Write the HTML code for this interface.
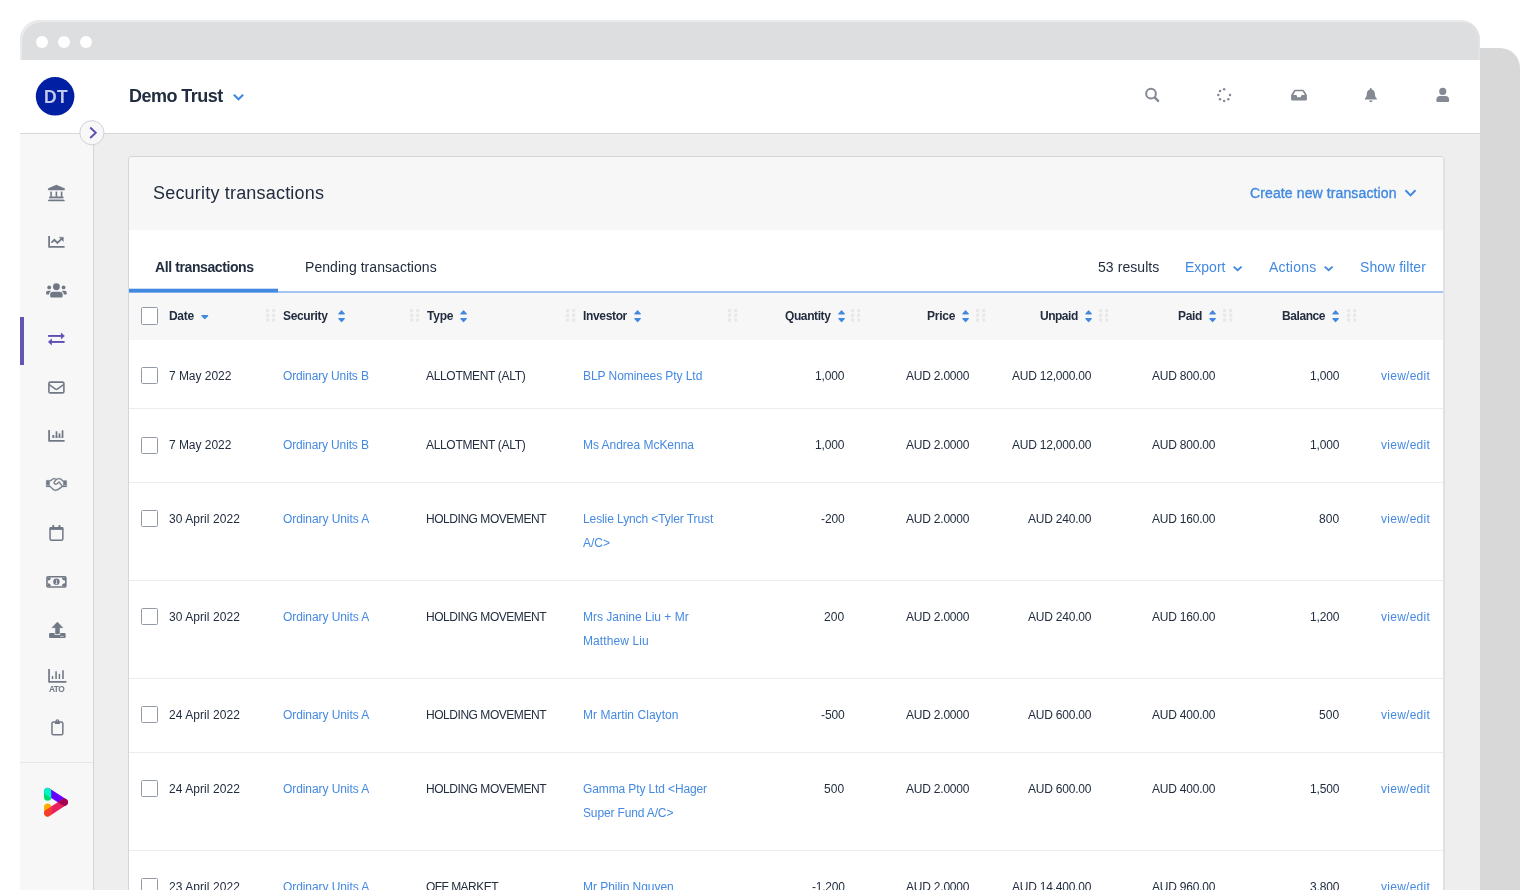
<!DOCTYPE html>
<html lang="en">
<head>
<meta charset="utf-8">
<title>Security transactions - Demo Trust</title>
<style>
*{box-sizing:border-box}
html,body{margin:0;padding:0}
body{width:1540px;height:890px;overflow:hidden;position:relative;background:#fff;font-family:"Liberation Sans",sans-serif;}
.abs,.t,.ic,.cb{position:absolute}
.t{white-space:pre;margin:0;font-weight:400;text-decoration:none;will-change:transform}
.ic{display:block;overflow:visible}
.shadow{left:1440px;top:48px;width:80px;height:900px;background:#d8d8d8;border-radius:0 20px 0 0}
.window{left:20px;top:20px;width:1460px;height:900px;background:#eeeeee;border-radius:20px 20px 0 0}
.chrome{left:20px;top:20px;width:1460px;height:40px;background:#dddee0;border-radius:20px 20px 0 0;box-shadow:inset 2px 2px 0 0 #eaebed, inset -2px 0 0 0 #e2e3e5}
.dot{width:12px;height:12px;border-radius:50%;background:#fff;top:36px}
.topbar{left:20px;top:60px;width:1460px;height:74px;background:#fff;border-bottom:1px solid #d6d8dc}
.sidebar{left:20px;top:134px;width:74px;height:800px;background:#f7f7f7;border-right:1px solid #d3d5da}
.card{left:128px;top:156px;width:1317px;height:800px;background:#fff;border:1px solid #d2d5da;border-right:2px solid #dfe1e5;border-radius:4px 5px 0 0}
.cardhead{left:129px;top:157px;width:1314px;height:73px;background:#f7f7f7;border-radius:3px 3px 0 0}
.thead{left:129px;top:293px;width:1314px;height:47px;background:#f7f7f7}
.tabline{left:129px;top:291px;width:1314px;height:2px;background:#a5c6f0}
.tabactive{left:129px;top:289px;width:149px;height:3px;background:#4189e0;box-shadow:0 -1px 0 #c9dcf6, 0 1px 0 #7fafea}
.rowline{left:129px;width:1314px;height:1px;background:#ececee}
.cb{width:17px;height:17px;border:1px solid #949aa3;border-radius:1.5px;background:#fff;left:141px}
.activebar{left:20px;top:317px;width:4px;height:48px;background:#6554b4}
.sep{left:20px;top:762px;width:73px;height:1px;background:#e6e6e8}
</style>
</head>
<body>
<div class="abs shadow"></div>
<div class="app">
<div class="abs window"></div>
<div class="titlebar"><div class="abs chrome"></div><span class="abs dot" style="left:36px"></span><span class="abs dot" style="left:58px"></span><span class="abs dot" style="left:80px"></span></div>
<header>
<div class="abs topbar"></div>
<svg class="ic" aria-hidden="true" style="left:30px;top:70px" width="50" height="50" viewBox="30 70 50 50"><circle cx="55.1" cy="96.3" r="19.3" fill="#001fa3"/></svg>
<span class="t avatar" style="left:44.19px;top:84.14px;font-size:17.5px;line-height:26px;color:#c3c9ea;letter-spacing:0.448px;font-weight:700;">DT</span>
<h1 class="t" style="left:129.01px;top:82.76px;font-size:18px;line-height:27px;color:#222d3f;letter-spacing:-0.528px;font-weight:700;">Demo Trust</h1>
<svg class="ic" aria-hidden="true" style="left:230px;top:90px" width="16" height="14" viewBox="0 0 16 14"><path d="M3.9 4.7 L8.5 9.2 L13.1 4.7" fill="none" stroke="#4189e0" stroke-width="2.1"/></svg>
<svg class="ic" aria-hidden="true" style="left:1130px;top:80px" width="340" height="30" viewBox="1130 80 340 30"><g><circle cx="1151" cy="93.7" r="4.85" fill="none" stroke="#848994" stroke-width="2"/><line x1="1154.9" y1="97.6" x2="1158.1" y2="100.8" stroke="#848994" stroke-width="2.5" stroke-linecap="round"/></g><g><circle cx="1224.15" cy="89.25" r="1.25" fill="#848994"/><circle cx="1230.00" cy="95.10" r="1.25" fill="#848994"/><circle cx="1228.29" cy="99.24" r="1.25" fill="#848994"/><circle cx="1224.15" cy="100.95" r="1.25" fill="#848994"/><circle cx="1220.01" cy="99.24" r="1.25" fill="#848994"/><circle cx="1218.30" cy="95.10" r="1.25" fill="#848994"/><circle cx="1220.01" cy="90.96" r="1.25" fill="#848994"/></g><g transform="translate(1286 82)"><path fill-rule="evenodd" fill="#848994" d="M8.7 7.7 H17.1 Q17.6 7.7 17.9 8.2 L20.9 13 V17.6 Q20.9 18.4 20.1 18.4 H5.9 Q5.1 18.4 5.1 17.6 V13 L8.1 8.2 Q8.4 7.7 8.7 7.7 Z M9.4 9.3 H16.6 L18.8 13.1 H15.6 L14.6 15.2 H11.4 L10.4 13.1 H7.2 Z"/></g><g transform="translate(1358 82)"><path fill="#848994" d="M12.85 5.9 a0.95 0.95 0 0 1 0.95 0.95 V7.4 C15.6 7.9 16.9 9.5 16.9 11.6 C16.9 14.3 17.6 15.3 18.6 16.3 Q19.1 16.8 18.9 17.2 Q18.7 17.6 18.2 17.6 H7.5 Q7 17.6 6.8 17.2 Q6.6 16.8 7.1 16.3 C8.1 15.3 8.8 14.3 8.8 11.6 C8.8 9.5 10.1 7.9 11.9 7.4 V6.85 a0.95 0.95 0 0 1 0.95 -0.95 Z M11.1 18.5 H14.6 a1.75 1.75 0 0 1 -3.5 0 Z"/></g><g><circle cx="1442.75" cy="91.4" r="3.55" fill="#848994"/><path d="M1436.4 101 V99.6 a3.7 3.7 0 0 1 3.7 -3.7 h5.3 a3.7 3.7 0 0 1 3.7 3.7 V101 a1.1 1.1 0 0 1 -1.1 1.1 h-10.5 a1.1 1.1 0 0 1 -1.1 -1.1 Z" fill="#848994"/></g></svg>
</header>
<nav>
<div class="abs sidebar"></div>
<svg class="ic" aria-hidden="true" style="left:76px;top:116px" width="32" height="32" viewBox="76 116 32 32"><circle cx="91.9" cy="132.75" r="12.1" fill="#f8f8f8" stroke="#d0d2d8" stroke-width="1"/><path d="M90.2 127.5 L95.8 132.75 L90.2 138" fill="none" stroke="#5f4db3" stroke-width="1.9"/></svg>
<div class="abs activebar"></div>
<svg class="ic" aria-hidden="true" style="left:40px;top:170px" width="40" height="580" viewBox="40 170 40 580"><g transform="translate(44 180)"><path d="M4.3 8.6 L12.4 5.1 L20.5 8.6 V10 H4.3 Z" fill="#717885" stroke="#717885" stroke-width="0.5" stroke-linejoin="round"/><rect x="6.3" y="11.6" width="1.6" height="5.2" fill="#717885"/><rect x="11.6" y="11.6" width="1.6" height="5.2" fill="#717885"/><rect x="16.8" y="11.6" width="1.6" height="5.2" fill="#717885"/><rect x="5.1" y="16.6" width="14.4" height="1.4" rx="0.5" fill="#717885"/><rect x="4.1" y="19.7" width="16.6" height="1.6" rx="0.6" fill="#717885"/><rect x="5.1" y="18" width="14.4" height="1.7" fill="#717885" opacity="0.35"/></g><g transform="translate(44 229)"><path d="M5.1 7 V17.95 H20.6" fill="none" stroke="#717885" stroke-width="1.75" stroke-linejoin="round"/><path d="M8 13.1 L10.4 10.8 L13.4 13.9 L17.6 9.9" fill="none" stroke="#717885" stroke-width="1.8" stroke-linecap="round" stroke-linejoin="miter"/><path d="M15.1 8.2 H19.4 V12.5 Z" fill="#717885" stroke="#717885" stroke-width="0.4" stroke-linejoin="round"/></g><g transform="translate(44 278)"><circle cx="12.4" cy="8.8" r="3.45" fill="#717885"/><path d="M6.1 18.3 V16.9 a3.2 3.2 0 0 1 3.2 -3.2 h6.2 a3.2 3.2 0 0 1 3.2 3.2 V18.3 a1.1 1.1 0 0 1 -1.1 1.1 H7.2 a1.1 1.1 0 0 1 -1.1 -1.1 Z" fill="#717885"/><circle cx="5.2" cy="9.4" r="1.9" fill="#717885"/><circle cx="19.55" cy="9.4" r="1.9" fill="#717885"/><path d="M7.1 13.1 Q6.4 12.7 5.6 12.7 H4.2 A2.2 2.2 0 0 0 2 14.9 V15.4 a1 1 0 0 0 1 1 H4.9 Q5.1 14.2 7.1 13.1 Z" fill="#717885"/><path d="M17.7 13.1 Q18.4 12.7 19.2 12.7 H20.6 A2.2 2.2 0 0 1 22.8 14.9 V15.4 a1 1 0 0 1 -1 1 H19.9 Q19.7 14.2 17.7 13.1 Z" fill="#717885"/></g><g transform="translate(44 326)"><path d="M4.1 9.95 H19" stroke="#5f4db3" stroke-width="1.9" fill="none"/><path d="M17.3 7.1 L20.4 9.95 L17.3 12.8 Z" fill="#5f4db3" stroke="#5f4db3" stroke-width="0.7" stroke-linejoin="round"/><path d="M20.6 15.95 H5.8" stroke="#5f4db3" stroke-width="1.9" fill="none"/><path d="M7.5 13.1 L4.4 15.95 L7.5 18.8 Z" fill="#5f4db3" stroke="#5f4db3" stroke-width="0.7" stroke-linejoin="round"/></g><g transform="translate(44 375)"><rect x="4.9" y="7.1" width="15" height="10.8" rx="1.4" fill="none" stroke="#717885" stroke-width="1.6"/><path d="M5.2 9.7 L11.5 14.1 Q12.4 14.7 13.3 14.1 L19.6 9.7" fill="none" stroke="#717885" stroke-width="1.5" stroke-linejoin="round"/></g><g transform="translate(44 423)"><path d="M5.1 7 V17.95 H20.6" fill="none" stroke="#717885" stroke-width="1.75" stroke-linejoin="round"/><rect x="8.3" y="12.1" width="1.75" height="2.8" rx="0.3" fill="#717885"/><rect x="11.65" y="8.2" width="1.7" height="6.7" rx="0.3" fill="#717885"/><rect x="14.7" y="10.2" width="1.6" height="4.7" rx="0.3" fill="#717885"/><rect x="17.7" y="7.2" width="1.7" height="7.7" rx="0.3" fill="#717885"/><rect x="10.05" y="12.6" width="7.65" height="2.3" fill="#717885" opacity="0.3"/></g><g transform="translate(46.2 478.2) scale(0.008898 0.008656)"><path fill="#717885" stroke="#717885" stroke-width="22" d="M136 864Q152 896 192 896Q232 896 248 864Q264 832 248 800Q232 768 192 768Q152 768 136 800Q120 832 136 864ZM1665 838Q1655 825 1626.5 788Q1598 751 1585 734Q1572 717 1547 685Q1522 653 1504.5 632Q1487 611 1464 585Q1441 559 1419 536L1294 676Q1211 770 1085.5 768Q960 766 880 670Q823 601 823.5 512Q824 423 882 355L1059 149Q1037 138 1008 132.5Q979 127 960.5 126.5Q942 126 904 127Q866 128 855 128Q763 128 697 194L539 352H384V896Q389 896 405 895.5Q421 895 427 895.5Q433 896 446.5 897.5Q460 899 467 902Q474 905 484.5 910.5Q495 916 503 924L800 1216Q915 1327 1027 1327Q1105 1327 1152 1280Q1209 1300 1264.5 1272Q1320 1244 1337 1187Q1411 1193 1464 1143Q1484 1125 1500 1097.5Q1516 1070 1514 1047Q1524 1057 1557 1057Q1600 1057 1634 1036Q1668 1015 1683.5 983Q1699 951 1695.5 911.5Q1692 872 1665 838ZM1824 896H1920V384H1827L1670 204Q1604 128 1501 128H1334Q1245 128 1188 195L979 438Q951 471 951 513Q951 555 978 588Q1021 639 1088 640Q1155 641 1199 591L1392 373Q1417 350 1445.5 351.5Q1474 353 1492.5 378.5Q1511 404 1501 435Q1517 454 1557 498Q1597 542 1617 566Q1646 602 1699.5 671.5Q1753 741 1764 756Q1816 822 1824 896ZM2056 864Q2072 896 2112 896Q2152 896 2168 864Q2184 832 2168 800Q2152 768 2112 768Q2072 768 2056 800Q2040 832 2056 864ZM2304 320V960Q2304 986 2285 1005Q2266 1024 2240 1024H1806Q1779 1089 1724 1130.5Q1669 1172 1599 1182Q1566 1230 1518.5 1263.5Q1471 1297 1416 1309Q1374 1362 1311.5 1390.5Q1249 1419 1183 1415Q1123 1449 1057 1454.5Q991 1460 929.5 1440.5Q868 1421 812.5 1387Q757 1353 709 1306L422 1024H64Q38 1024 19 1005Q0 986 0 960V288Q0 262 19 243Q38 224 64 224H485Q499 210 532 176Q565 142 579.5 128Q594 114 623.5 88Q653 62 674 50.5Q695 39 725 25Q755 11 787 5.5Q819 0 855 0H972Q1071 0 1153 56Q1235 0 1334 0H1501Q1536 0 1568 6Q1600 12 1624.5 20.5Q1649 29 1676 47Q1703 65 1720.5 78Q1738 91 1763.5 117.5Q1789 144 1802.5 159.5Q1816 175 1843.5 207.5Q1871 240 1885 256H2240Q2266 256 2285 275Q2304 294 2304 320Z"/></g><g transform="translate(44 520)"><rect x="6.05" y="7.75" width="12.8" height="12.5" rx="1.5" fill="none" stroke="#717885" stroke-width="1.5"/><rect x="5.6" y="7.2" width="13.7" height="2.7" fill="#717885"/><rect x="8.3" y="5.1" width="1.9" height="2.6" rx="0.4" fill="#717885"/><rect x="14.6" y="5.1" width="1.8" height="2.6" rx="0.4" fill="#717885"/></g><g transform="translate(44 569)"><rect x="3" y="7.7" width="18.8" height="10.3" rx="0.9" fill="none" stroke="#717885" stroke-width="1.6"/><path d="M3.8 8.5 h3 a3 3 0 0 1 -3 3 Z M21 8.5 v3 a3 3 0 0 1 -3 -3 Z M3.8 17.2 v-3 a3 3 0 0 1 3 3 Z M21 17.2 h-3 a3 3 0 0 1 3 -3 Z" fill="#717885"/><circle cx="12.4" cy="12.65" r="3.2" fill="#717885"/><path d="M11.7 11.3 L12.8 10.7 V14 H13.4 V14.7 H11.5 V14 H12.1 V11.6 L11.7 11.8 Z" fill="#f3f3f4"/></g><g transform="translate(44 617)"><path d="M13.4 5.1 L18.9 10.7 H15.5 V16.4 a0.5 0.5 0 0 1 -0.5 0.5 H12 a0.5 0.5 0 0 1 -0.5 -0.5 V10.7 H7.9 Z" fill="#717885" stroke="#717885" stroke-width="0.5" stroke-linejoin="round"/><path d="M5.9 16.1 H10.6 V17 a1.1 1.1 0 0 0 1.1 1.1 h3.6 a1.1 1.1 0 0 0 1.1 -1.1 V16.1 H20.8 a0.8 0.8 0 0 1 0.8 0.8 V20.2 a0.8 0.8 0 0 1 -0.8 0.8 H5.9 a0.8 0.8 0 0 1 -0.8 -0.8 V16.9 a0.8 0.8 0 0 1 0.8 -0.8 Z" fill="#717885"/><rect x="16" y="19.1" width="4" height="1" rx="0.4" fill="#b9bcc3"/></g><g transform="translate(43 665)"><path d="M6.05 4.1 V16.9 H23.4" fill="none" stroke="#717885" stroke-width="1.7" stroke-linejoin="round"/><rect x="8.8" y="11" width="1.45" height="3" rx="0.3" fill="#717885"/><rect x="12.3" y="6.3" width="1.55" height="7.7" rx="0.3" fill="#717885"/><rect x="15.7" y="8.8" width="1.45" height="5.2" rx="0.3" fill="#717885"/><rect x="19.2" y="5.3" width="1.6" height="8.7" rx="0.3" fill="#717885"/></g><g transform="translate(44 714)"><rect x="7.95" y="7.95" width="10.9" height="12.8" rx="1.6" fill="none" stroke="#717885" stroke-width="1.5"/><circle cx="13.4" cy="7.2" r="1.35" fill="none" stroke="#717885" stroke-width="1.3"/><rect x="10.9" y="8.1" width="5" height="1.8" rx="0.5" fill="#717885"/></g></svg>
<span class="t" style="left:49.0px;top:683.3px;font-size:8.4px;line-height:12px;font-weight:700;color:#717885;letter-spacing:-0.6px">ATO</span>
<div class="abs sep"></div>
<svg class="ic" aria-hidden="true" style="left:44px;top:788px" width="24" height="28.7" viewBox="0 0 24 28.7"><defs><clipPath id="lp1"><rect x="0.05" y="0" width="7.1" height="12.8" rx="3.55"/></clipPath><clipPath id="lp2"><rect x="0.05" y="15.4" width="7.1" height="13.2" rx="3.55"/></clipPath><clipPath id="lp3"><rect x="-3.55" y="-3.55" width="27.02" height="7.1" rx="3.55" transform="translate(3.6 3.55) rotate(32.5)"/></clipPath></defs><rect x="-3.55" y="-3.55" width="27.02" height="7.1" rx="3.55" transform="translate(3.6 3.55) rotate(32.5)" fill="#6a00ff"/><rect x="-3.55" y="-3.55" width="27.13" height="7.1" rx="3.55" transform="translate(3.6 25.05) rotate(-33)" fill="#e8205f"/><g clip-path="url(#lp3)"><rect x="-3.55" y="-3.55" width="27.13" height="7.1" rx="3.55" transform="translate(3.6 25.05) rotate(-33)" fill="#a5004f"/></g><rect x="0.05" y="0" width="7.1" height="12.8" rx="3.55" fill="#00dd6f"/><g clip-path="url(#lp1)"><rect x="-3.55" y="-3.55" width="27.02" height="7.1" rx="3.55" transform="translate(3.6 3.55) rotate(32.5)" fill="#00f5c8"/></g><rect x="0.05" y="15.4" width="7.1" height="13.2" rx="3.55" fill="#ffab00"/><g clip-path="url(#lp2)"><rect x="-3.55" y="-3.55" width="27.13" height="7.1" rx="3.55" transform="translate(3.6 25.05) rotate(-33)" fill="#f53d2f"/></g></svg>
</nav>
<main><section>
<div class="abs card"></div>
<div class="card-header"><div class="abs cardhead"></div>
<h2 class="t" style="left:153.01px;top:179.96px;font-size:18px;line-height:27px;color:#222d3f;letter-spacing:0.195px;">Security transactions</h2>
<a class="t" style="left:1250.13px;top:183.05px;font-size:14px;line-height:21px;color:#4189e0;letter-spacing:0.117px;-webkit-text-stroke:0.35px #4189e0;">Create new transaction</a>
<svg class="ic" aria-hidden="true" style="left:1403px;top:187px" width="15" height="12" viewBox="0 0 15 12"><path d="M2.5 3.2 L7.5 8.4 L12.5 3.2" fill="none" stroke="#4189e0" stroke-width="2"/></svg>
</div>
<div class="tabs"><div class="abs tabline"></div><div class="abs tabactive"></div>
<a class="t" style="left:155.13px;top:256.85px;font-size:14px;line-height:21px;color:#222d3f;letter-spacing:-0.399px;font-weight:700;">All transactions</a>
<a class="t" style="left:305.03px;top:256.75px;font-size:14px;line-height:21px;color:#222d3f;letter-spacing:0.050px;">Pending transactions</a>
<span class="t" style="left:1098.13px;top:256.75px;font-size:14px;line-height:21px;color:#222d3f;letter-spacing:0.070px;">53 results</span>
<a class="t" style="left:1184.83px;top:256.75px;font-size:14px;line-height:21px;color:#4189e0;letter-spacing:-0.008px;">Export</a>
<svg class="ic" aria-hidden="true" style="left:1231.7px;top:264px" width="12" height="9" viewBox="0 0 12 9"><path d="M1.7 2.6 L5.65 6.2 L9.6 2.6" fill="none" stroke="#4189e0" stroke-width="1.9"/></svg>
<a class="t" style="left:1269.23px;top:256.75px;font-size:14px;line-height:21px;color:#4189e0;letter-spacing:0.210px;">Actions</a>
<svg class="ic" aria-hidden="true" style="left:1322.9px;top:264px" width="12" height="9" viewBox="0 0 12 9"><path d="M1.7 2.6 L5.65 6.2 L9.6 2.6" fill="none" stroke="#4189e0" stroke-width="1.9"/></svg>
<a class="t" style="left:1359.93px;top:256.75px;font-size:14px;line-height:21px;color:#4189e0;letter-spacing:0.051px;">Show filter</a>
</div>
<div class="table" role="table">
<div class="thead-row" role="row"><div class="abs thead"></div><span class="cb" style="top:307px;height:18px"></span>
<div class="th" role="columnheader"><span class="t" style="left:169.44px;top:307.14px;font-size:12px;line-height:18px;color:#222d3f;letter-spacing:-0.312px;font-weight:700;">Date</span><svg class="ic" aria-hidden="true" style="left:200.8px;top:314.6px" width="7.6" height="4.4" viewBox="0 0 7.6 4.4"><path d="M0.9 0.7 L6.7 0.7 L3.8 3.7 Z" fill="#4189e0" stroke="#4189e0" stroke-width="1.2" stroke-linejoin="round"/></svg></div>
<div class="th" role="columnheader"><svg class="ic" aria-hidden="true" style="left:265.9px;top:309.2px" width="9.3" height="12.7" viewBox="0 0 9.3 12.7"><rect x="0" y="0" width="3.1" height="3.1" fill="#e8e8e8"/><rect x="0" y="4.75" width="3.1" height="3.1" fill="#e8e8e8"/><rect x="0" y="9.5" width="3.1" height="3.1" fill="#e8e8e8"/><rect x="6.1" y="0" width="3.1" height="3.1" fill="#e8e8e8"/><rect x="6.1" y="4.75" width="3.1" height="3.1" fill="#e8e8e8"/><rect x="6.1" y="9.5" width="3.1" height="3.1" fill="#e8e8e8"/></svg><span class="t" style="left:282.74px;top:307.14px;font-size:12px;line-height:18px;color:#222d3f;letter-spacing:-0.355px;font-weight:700;">Security</span><svg class="ic" aria-hidden="true" style="left:338.3px;top:309.6px" width="7.2" height="12.6" viewBox="0 0 7.2 12.6"><path d="M0.9 3.9 L3.6 1 L6.3 3.9 Z M0.9 8.7 L6.3 8.7 L3.6 11.6 Z" fill="#4189e0" stroke="#4189e0" stroke-width="1.2" stroke-linejoin="round"/></svg></div>
<div class="th" role="columnheader"><svg class="ic" aria-hidden="true" style="left:410.3px;top:309.2px" width="9.3" height="12.7" viewBox="0 0 9.3 12.7"><rect x="0" y="0" width="3.1" height="3.1" fill="#e8e8e8"/><rect x="0" y="4.75" width="3.1" height="3.1" fill="#e8e8e8"/><rect x="0" y="9.5" width="3.1" height="3.1" fill="#e8e8e8"/><rect x="6.1" y="0" width="3.1" height="3.1" fill="#e8e8e8"/><rect x="6.1" y="4.75" width="3.1" height="3.1" fill="#e8e8e8"/><rect x="6.1" y="9.5" width="3.1" height="3.1" fill="#e8e8e8"/></svg><span class="t" style="left:426.64px;top:307.14px;font-size:12px;line-height:18px;color:#222d3f;letter-spacing:-0.219px;font-weight:700;">Type</span><svg class="ic" aria-hidden="true" style="left:459.8px;top:309.6px" width="7.2" height="12.6" viewBox="0 0 7.2 12.6"><path d="M0.9 3.9 L3.6 1 L6.3 3.9 Z M0.9 8.7 L6.3 8.7 L3.6 11.6 Z" fill="#4189e0" stroke="#4189e0" stroke-width="1.2" stroke-linejoin="round"/></svg></div>
<div class="th" role="columnheader"><svg class="ic" aria-hidden="true" style="left:565.9px;top:309.2px" width="9.3" height="12.7" viewBox="0 0 9.3 12.7"><rect x="0" y="0" width="3.1" height="3.1" fill="#e8e8e8"/><rect x="0" y="4.75" width="3.1" height="3.1" fill="#e8e8e8"/><rect x="0" y="9.5" width="3.1" height="3.1" fill="#e8e8e8"/><rect x="6.1" y="0" width="3.1" height="3.1" fill="#e8e8e8"/><rect x="6.1" y="4.75" width="3.1" height="3.1" fill="#e8e8e8"/><rect x="6.1" y="9.5" width="3.1" height="3.1" fill="#e8e8e8"/></svg><span class="t" style="left:582.84px;top:307.14px;font-size:12px;line-height:18px;color:#222d3f;letter-spacing:-0.342px;font-weight:700;">Investor</span><svg class="ic" aria-hidden="true" style="left:633.5px;top:309.6px" width="7.2" height="12.6" viewBox="0 0 7.2 12.6"><path d="M0.9 3.9 L3.6 1 L6.3 3.9 Z M0.9 8.7 L6.3 8.7 L3.6 11.6 Z" fill="#4189e0" stroke="#4189e0" stroke-width="1.2" stroke-linejoin="round"/></svg><svg class="ic" aria-hidden="true" style="left:727.7px;top:309.2px" width="9.3" height="12.7" viewBox="0 0 9.3 12.7"><rect x="0" y="0" width="3.1" height="3.1" fill="#e8e8e8"/><rect x="0" y="4.75" width="3.1" height="3.1" fill="#e8e8e8"/><rect x="0" y="9.5" width="3.1" height="3.1" fill="#e8e8e8"/><rect x="6.1" y="0" width="3.1" height="3.1" fill="#e8e8e8"/><rect x="6.1" y="4.75" width="3.1" height="3.1" fill="#e8e8e8"/><rect x="6.1" y="9.5" width="3.1" height="3.1" fill="#e8e8e8"/></svg></div>
<div class="th" role="columnheader"><span class="t" style="left:785.04px;top:307.14px;font-size:12px;line-height:18px;color:#222d3f;letter-spacing:-0.398px;font-weight:700;">Quantity</span><svg class="ic" aria-hidden="true" style="left:837.8px;top:309.6px" width="7.2" height="12.6" viewBox="0 0 7.2 12.6"><path d="M0.9 3.9 L3.6 1 L6.3 3.9 Z M0.9 8.7 L6.3 8.7 L3.6 11.6 Z" fill="#4189e0" stroke="#4189e0" stroke-width="1.2" stroke-linejoin="round"/></svg><svg class="ic" aria-hidden="true" style="left:851.2px;top:309.2px" width="9.3" height="12.7" viewBox="0 0 9.3 12.7"><rect x="0" y="0" width="3.1" height="3.1" fill="#e8e8e8"/><rect x="0" y="4.75" width="3.1" height="3.1" fill="#e8e8e8"/><rect x="0" y="9.5" width="3.1" height="3.1" fill="#e8e8e8"/><rect x="6.1" y="0" width="3.1" height="3.1" fill="#e8e8e8"/><rect x="6.1" y="4.75" width="3.1" height="3.1" fill="#e8e8e8"/><rect x="6.1" y="9.5" width="3.1" height="3.1" fill="#e8e8e8"/></svg></div>
<div class="th" role="columnheader"><span class="t" style="left:927.14px;top:307.14px;font-size:12px;line-height:18px;color:#222d3f;letter-spacing:-0.263px;font-weight:700;">Price</span><svg class="ic" aria-hidden="true" style="left:962.0px;top:309.6px" width="7.2" height="12.6" viewBox="0 0 7.2 12.6"><path d="M0.9 3.9 L3.6 1 L6.3 3.9 Z M0.9 8.7 L6.3 8.7 L3.6 11.6 Z" fill="#4189e0" stroke="#4189e0" stroke-width="1.2" stroke-linejoin="round"/></svg><svg class="ic" aria-hidden="true" style="left:975.5px;top:309.2px" width="9.3" height="12.7" viewBox="0 0 9.3 12.7"><rect x="0" y="0" width="3.1" height="3.1" fill="#e8e8e8"/><rect x="0" y="4.75" width="3.1" height="3.1" fill="#e8e8e8"/><rect x="0" y="9.5" width="3.1" height="3.1" fill="#e8e8e8"/><rect x="6.1" y="0" width="3.1" height="3.1" fill="#e8e8e8"/><rect x="6.1" y="4.75" width="3.1" height="3.1" fill="#e8e8e8"/><rect x="6.1" y="9.5" width="3.1" height="3.1" fill="#e8e8e8"/></svg></div>
<div class="th" role="columnheader"><span class="t" style="left:1039.84px;top:307.14px;font-size:12px;line-height:18px;color:#222d3f;letter-spacing:-0.487px;font-weight:700;">Unpaid</span><svg class="ic" aria-hidden="true" style="left:1084.5px;top:309.6px" width="7.2" height="12.6" viewBox="0 0 7.2 12.6"><path d="M0.9 3.9 L3.6 1 L6.3 3.9 Z M0.9 8.7 L6.3 8.7 L3.6 11.6 Z" fill="#4189e0" stroke="#4189e0" stroke-width="1.2" stroke-linejoin="round"/></svg><svg class="ic" aria-hidden="true" style="left:1098.9px;top:309.2px" width="9.3" height="12.7" viewBox="0 0 9.3 12.7"><rect x="0" y="0" width="3.1" height="3.1" fill="#e8e8e8"/><rect x="0" y="4.75" width="3.1" height="3.1" fill="#e8e8e8"/><rect x="0" y="9.5" width="3.1" height="3.1" fill="#e8e8e8"/><rect x="6.1" y="0" width="3.1" height="3.1" fill="#e8e8e8"/><rect x="6.1" y="4.75" width="3.1" height="3.1" fill="#e8e8e8"/><rect x="6.1" y="9.5" width="3.1" height="3.1" fill="#e8e8e8"/></svg></div>
<div class="th" role="columnheader"><span class="t" style="left:1178.14px;top:307.14px;font-size:12px;line-height:18px;color:#222d3f;letter-spacing:-0.328px;font-weight:700;">Paid</span><svg class="ic" aria-hidden="true" style="left:1208.9px;top:309.6px" width="7.2" height="12.6" viewBox="0 0 7.2 12.6"><path d="M0.9 3.9 L3.6 1 L6.3 3.9 Z M0.9 8.7 L6.3 8.7 L3.6 11.6 Z" fill="#4189e0" stroke="#4189e0" stroke-width="1.2" stroke-linejoin="round"/></svg><svg class="ic" aria-hidden="true" style="left:1223.2px;top:309.2px" width="9.3" height="12.7" viewBox="0 0 9.3 12.7"><rect x="0" y="0" width="3.1" height="3.1" fill="#e8e8e8"/><rect x="0" y="4.75" width="3.1" height="3.1" fill="#e8e8e8"/><rect x="0" y="9.5" width="3.1" height="3.1" fill="#e8e8e8"/><rect x="6.1" y="0" width="3.1" height="3.1" fill="#e8e8e8"/><rect x="6.1" y="4.75" width="3.1" height="3.1" fill="#e8e8e8"/><rect x="6.1" y="9.5" width="3.1" height="3.1" fill="#e8e8e8"/></svg></div>
<div class="th" role="columnheader"><span class="t" style="left:1282.14px;top:307.14px;font-size:12px;line-height:18px;color:#222d3f;letter-spacing:-0.413px;font-weight:700;">Balance</span><svg class="ic" aria-hidden="true" style="left:1332.3px;top:309.6px" width="7.2" height="12.6" viewBox="0 0 7.2 12.6"><path d="M0.9 3.9 L3.6 1 L6.3 3.9 Z M0.9 8.7 L6.3 8.7 L3.6 11.6 Z" fill="#4189e0" stroke="#4189e0" stroke-width="1.2" stroke-linejoin="round"/></svg><svg class="ic" aria-hidden="true" style="left:1346.6px;top:309.2px" width="9.3" height="12.7" viewBox="0 0 9.3 12.7"><rect x="0" y="0" width="3.1" height="3.1" fill="#e8e8e8"/><rect x="0" y="4.75" width="3.1" height="3.1" fill="#e8e8e8"/><rect x="0" y="9.5" width="3.1" height="3.1" fill="#e8e8e8"/><rect x="6.1" y="0" width="3.1" height="3.1" fill="#e8e8e8"/><rect x="6.1" y="4.75" width="3.1" height="3.1" fill="#e8e8e8"/><rect x="6.1" y="9.5" width="3.1" height="3.1" fill="#e8e8e8"/></svg></div>
</div>
<div class="row" role="row"><span class="cb" style="top:367px"></span><span class="t" style="left:169.44px;top:366.94px;font-size:12px;line-height:18px;color:#222d3f;letter-spacing:-0.044px;">7 May 2022</span><a class="t" style="left:282.74px;top:366.94px;font-size:12px;line-height:18px;color:#4589e1;letter-spacing:-0.141px;">Ordinary Units B</a><span class="t" style="left:426.34px;top:366.94px;font-size:12px;line-height:18px;color:#222d3f;letter-spacing:-0.326px;">ALLOTMENT (ALT)</span><a class="investor"><span class="t" style="left:582.94px;top:366.94px;font-size:12px;line-height:18px;color:#4589e1;letter-spacing:-0.063px;">BLP Nominees Pty Ltd</span></a><span class="t" style="left:815.18px;top:366.94px;font-size:12px;line-height:18px;color:#222d3f;letter-spacing:-0.138px;">1,000</span><span class="t" style="left:905.70px;top:366.94px;font-size:12px;line-height:18px;color:#222d3f;letter-spacing:-0.212px;">AUD 2.0000</span><span class="t" style="left:1012.22px;top:366.94px;font-size:12px;line-height:18px;color:#222d3f;letter-spacing:-0.227px;">AUD 12,000.00</span><span class="t" style="left:1152.20px;top:366.94px;font-size:12px;line-height:18px;color:#222d3f;letter-spacing:-0.212px;">AUD 800.00</span><span class="t" style="left:1309.58px;top:366.94px;font-size:12px;line-height:18px;color:#222d3f;letter-spacing:-0.138px;">1,000</span><a class="t" style="left:1381.14px;top:366.94px;font-size:12px;line-height:18px;color:#4589e1;letter-spacing:0.262px;">view/edit</a><div class="abs rowline" style="top:408px"></div></div>
<div class="row" role="row"><span class="cb" style="top:437px"></span><span class="t" style="left:169.44px;top:435.94px;font-size:12px;line-height:18px;color:#222d3f;letter-spacing:-0.044px;">7 May 2022</span><a class="t" style="left:282.74px;top:435.94px;font-size:12px;line-height:18px;color:#4589e1;letter-spacing:-0.141px;">Ordinary Units B</a><span class="t" style="left:426.34px;top:435.94px;font-size:12px;line-height:18px;color:#222d3f;letter-spacing:-0.326px;">ALLOTMENT (ALT)</span><a class="investor"><span class="t" style="left:582.94px;top:435.94px;font-size:12px;line-height:18px;color:#4589e1;letter-spacing:-0.025px;">Ms Andrea McKenna</span></a><span class="t" style="left:815.18px;top:435.94px;font-size:12px;line-height:18px;color:#222d3f;letter-spacing:-0.138px;">1,000</span><span class="t" style="left:905.70px;top:435.94px;font-size:12px;line-height:18px;color:#222d3f;letter-spacing:-0.212px;">AUD 2.0000</span><span class="t" style="left:1012.22px;top:435.94px;font-size:12px;line-height:18px;color:#222d3f;letter-spacing:-0.227px;">AUD 12,000.00</span><span class="t" style="left:1152.20px;top:435.94px;font-size:12px;line-height:18px;color:#222d3f;letter-spacing:-0.212px;">AUD 800.00</span><span class="t" style="left:1309.58px;top:435.94px;font-size:12px;line-height:18px;color:#222d3f;letter-spacing:-0.138px;">1,000</span><a class="t" style="left:1381.14px;top:435.94px;font-size:12px;line-height:18px;color:#4589e1;letter-spacing:0.262px;">view/edit</a><div class="abs rowline" style="top:482px"></div></div>
<div class="row" role="row"><span class="cb" style="top:510px"></span><span class="t" style="left:169.44px;top:509.94px;font-size:12px;line-height:18px;color:#222d3f;letter-spacing:0.064px;">30 April 2022</span><a class="t" style="left:282.74px;top:509.94px;font-size:12px;line-height:18px;color:#4589e1;letter-spacing:-0.077px;">Ordinary Units A</a><span class="t" style="left:426.34px;top:509.94px;font-size:12px;line-height:18px;color:#222d3f;letter-spacing:-0.456px;">HOLDING MOVEMENT</span><a class="investor"><span class="t" style="left:582.94px;top:509.94px;font-size:12px;line-height:18px;color:#4589e1;letter-spacing:-0.098px;">Leslie Lynch &lt;Tyler Trust</span><span class="t" style="left:582.94px;top:533.94px;font-size:12px;line-height:18px;color:#4589e1;letter-spacing:-0.035px;">A/C&gt;</span></a><span class="t" style="left:820.98px;top:509.94px;font-size:12px;line-height:18px;color:#222d3f;letter-spacing:-0.117px;">-200</span><span class="t" style="left:905.70px;top:509.94px;font-size:12px;line-height:18px;color:#222d3f;letter-spacing:-0.212px;">AUD 2.0000</span><span class="t" style="left:1028.10px;top:509.94px;font-size:12px;line-height:18px;color:#222d3f;letter-spacing:-0.212px;">AUD 240.00</span><span class="t" style="left:1152.20px;top:509.94px;font-size:12px;line-height:18px;color:#222d3f;letter-spacing:-0.212px;">AUD 160.00</span><span class="t" style="left:1318.89px;top:509.94px;font-size:12px;line-height:18px;color:#222d3f;letter-spacing:0.068px;">800</span><a class="t" style="left:1381.14px;top:509.94px;font-size:12px;line-height:18px;color:#4589e1;letter-spacing:0.262px;">view/edit</a><div class="abs rowline" style="top:580px"></div></div>
<div class="row" role="row"><span class="cb" style="top:608px"></span><span class="t" style="left:169.44px;top:607.94px;font-size:12px;line-height:18px;color:#222d3f;letter-spacing:0.064px;">30 April 2022</span><a class="t" style="left:282.74px;top:607.94px;font-size:12px;line-height:18px;color:#4589e1;letter-spacing:-0.077px;">Ordinary Units A</a><span class="t" style="left:426.34px;top:607.94px;font-size:12px;line-height:18px;color:#222d3f;letter-spacing:-0.456px;">HOLDING MOVEMENT</span><a class="investor"><span class="t" style="left:582.94px;top:607.94px;font-size:12px;line-height:18px;color:#4589e1;letter-spacing:-0.001px;">Mrs Janine Liu + Mr</span><span class="t" style="left:582.94px;top:631.94px;font-size:12px;line-height:18px;color:#4589e1;letter-spacing:0.102px;">Matthew Liu</span></a><span class="t" style="left:824.49px;top:607.94px;font-size:12px;line-height:18px;color:#222d3f;letter-spacing:0.068px;">200</span><span class="t" style="left:905.70px;top:607.94px;font-size:12px;line-height:18px;color:#222d3f;letter-spacing:-0.212px;">AUD 2.0000</span><span class="t" style="left:1028.10px;top:607.94px;font-size:12px;line-height:18px;color:#222d3f;letter-spacing:-0.212px;">AUD 240.00</span><span class="t" style="left:1152.20px;top:607.94px;font-size:12px;line-height:18px;color:#222d3f;letter-spacing:-0.212px;">AUD 160.00</span><span class="t" style="left:1309.58px;top:607.94px;font-size:12px;line-height:18px;color:#222d3f;letter-spacing:-0.138px;">1,200</span><a class="t" style="left:1381.14px;top:607.94px;font-size:12px;line-height:18px;color:#4589e1;letter-spacing:0.262px;">view/edit</a><div class="abs rowline" style="top:678px"></div></div>
<div class="row" role="row"><span class="cb" style="top:706px"></span><span class="t" style="left:169.44px;top:705.94px;font-size:12px;line-height:18px;color:#222d3f;letter-spacing:0.064px;">24 April 2022</span><a class="t" style="left:282.74px;top:705.94px;font-size:12px;line-height:18px;color:#4589e1;letter-spacing:-0.077px;">Ordinary Units A</a><span class="t" style="left:426.34px;top:705.94px;font-size:12px;line-height:18px;color:#222d3f;letter-spacing:-0.456px;">HOLDING MOVEMENT</span><a class="investor"><span class="t" style="left:582.94px;top:705.94px;font-size:12px;line-height:18px;color:#4589e1;letter-spacing:0.046px;">Mr Martin Clayton</span></a><span class="t" style="left:820.98px;top:705.94px;font-size:12px;line-height:18px;color:#222d3f;letter-spacing:-0.117px;">-500</span><span class="t" style="left:905.70px;top:705.94px;font-size:12px;line-height:18px;color:#222d3f;letter-spacing:-0.212px;">AUD 2.0000</span><span class="t" style="left:1028.10px;top:705.94px;font-size:12px;line-height:18px;color:#222d3f;letter-spacing:-0.212px;">AUD 600.00</span><span class="t" style="left:1152.20px;top:705.94px;font-size:12px;line-height:18px;color:#222d3f;letter-spacing:-0.212px;">AUD 400.00</span><span class="t" style="left:1318.89px;top:705.94px;font-size:12px;line-height:18px;color:#222d3f;letter-spacing:0.068px;">500</span><a class="t" style="left:1381.14px;top:705.94px;font-size:12px;line-height:18px;color:#4589e1;letter-spacing:0.262px;">view/edit</a><div class="abs rowline" style="top:752px"></div></div>
<div class="row" role="row"><span class="cb" style="top:780px"></span><span class="t" style="left:169.44px;top:779.94px;font-size:12px;line-height:18px;color:#222d3f;letter-spacing:0.064px;">24 April 2022</span><a class="t" style="left:282.74px;top:779.94px;font-size:12px;line-height:18px;color:#4589e1;letter-spacing:-0.077px;">Ordinary Units A</a><span class="t" style="left:426.34px;top:779.94px;font-size:12px;line-height:18px;color:#222d3f;letter-spacing:-0.456px;">HOLDING MOVEMENT</span><a class="investor"><span class="t" style="left:582.94px;top:779.94px;font-size:12px;line-height:18px;color:#4589e1;letter-spacing:-0.120px;">Gamma Pty Ltd &lt;Hager</span><span class="t" style="left:582.94px;top:803.94px;font-size:12px;line-height:18px;color:#4589e1;letter-spacing:-0.143px;">Super Fund A/C&gt;</span></a><span class="t" style="left:824.49px;top:779.94px;font-size:12px;line-height:18px;color:#222d3f;letter-spacing:0.068px;">500</span><span class="t" style="left:905.70px;top:779.94px;font-size:12px;line-height:18px;color:#222d3f;letter-spacing:-0.212px;">AUD 2.0000</span><span class="t" style="left:1028.10px;top:779.94px;font-size:12px;line-height:18px;color:#222d3f;letter-spacing:-0.212px;">AUD 600.00</span><span class="t" style="left:1152.20px;top:779.94px;font-size:12px;line-height:18px;color:#222d3f;letter-spacing:-0.212px;">AUD 400.00</span><span class="t" style="left:1309.58px;top:779.94px;font-size:12px;line-height:18px;color:#222d3f;letter-spacing:-0.138px;">1,500</span><a class="t" style="left:1381.14px;top:779.94px;font-size:12px;line-height:18px;color:#4589e1;letter-spacing:0.262px;">view/edit</a><div class="abs rowline" style="top:850px"></div></div>
<div class="row" role="row"><span class="cb" style="top:878px"></span><span class="t" style="left:169.44px;top:877.94px;font-size:12px;line-height:18px;color:#222d3f;letter-spacing:0.064px;">23 April 2022</span><a class="t" style="left:282.74px;top:877.94px;font-size:12px;line-height:18px;color:#4589e1;letter-spacing:-0.077px;">Ordinary Units A</a><span class="t" style="left:426.34px;top:877.94px;font-size:12px;line-height:18px;color:#222d3f;letter-spacing:-0.541px;">OFF MARKET</span><a class="investor"><span class="t" style="left:582.94px;top:877.94px;font-size:12px;line-height:18px;color:#4589e1;letter-spacing:-0.043px;">Mr Philip Nguyen</span></a><span class="t" style="left:811.77px;top:877.94px;font-size:12px;line-height:18px;color:#222d3f;letter-spacing:-0.229px;">-1,200</span><span class="t" style="left:905.70px;top:877.94px;font-size:12px;line-height:18px;color:#222d3f;letter-spacing:-0.212px;">AUD 2.0000</span><span class="t" style="left:1012.22px;top:877.94px;font-size:12px;line-height:18px;color:#222d3f;letter-spacing:-0.227px;">AUD 14,400.00</span><span class="t" style="left:1152.20px;top:877.94px;font-size:12px;line-height:18px;color:#222d3f;letter-spacing:-0.212px;">AUD 960.00</span><span class="t" style="left:1309.58px;top:877.94px;font-size:12px;line-height:18px;color:#222d3f;letter-spacing:-0.138px;">3,800</span><a class="t" style="left:1381.14px;top:877.94px;font-size:12px;line-height:18px;color:#4589e1;letter-spacing:0.262px;">view/edit</a></div>
</div>
</section></main>
</div>
</body>
</html>
